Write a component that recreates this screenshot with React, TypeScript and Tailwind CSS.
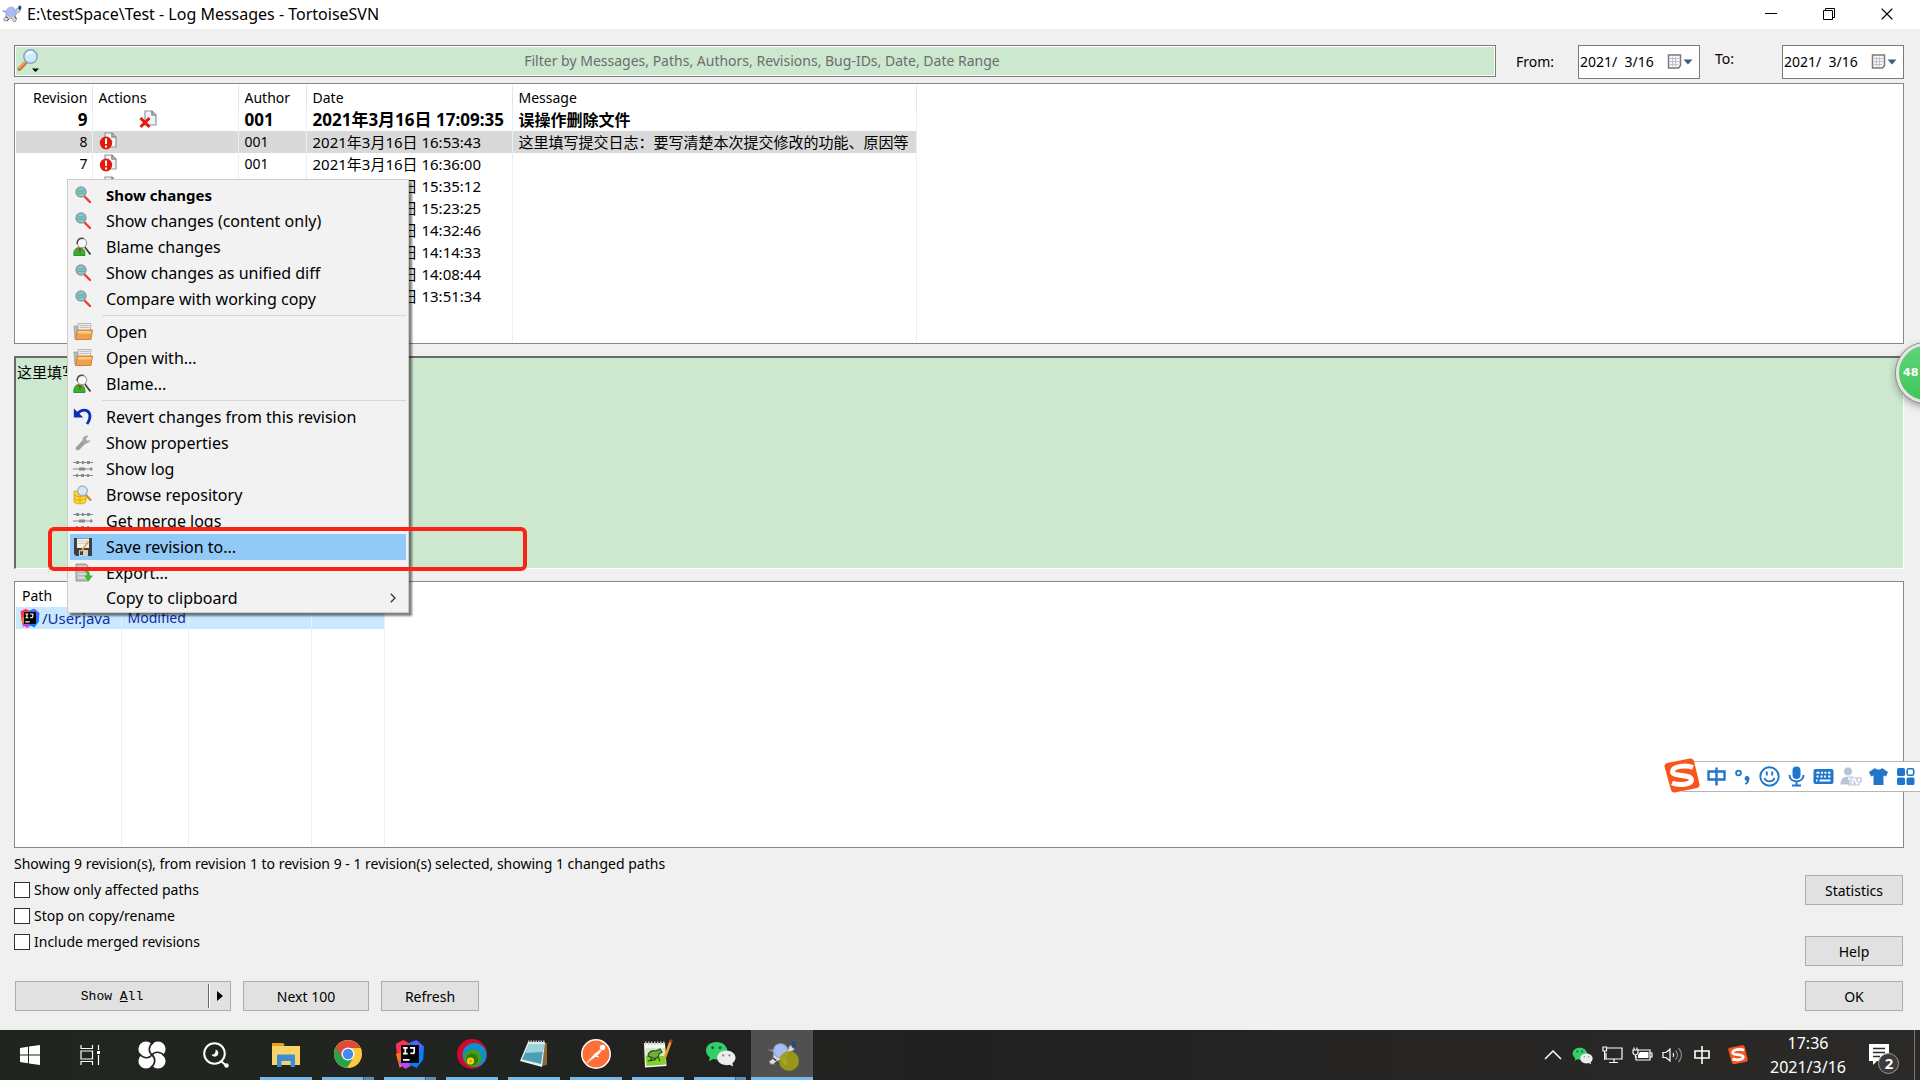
import React, { useState } from 'react';
import { X } from 'lucide-react';

const UI_FONT = "font-['Noto_Sans','Noto_Sans_CJK_SC',sans-serif]";

interface Revision {
  id: number;
  action: 'modified' | 'deleted';
  author: string;
  date: string;
  message: string;
}

const revisions: Revision[] = [
  { id: 9, action: 'deleted', author: '001', date: '2021年3月16日 17:09:35', message: '误操作删除文件' },
  { id: 8, action: 'modified', author: '001', date: '2021年3月16日 16:53:43', message: '这里填写提交日志：要写清楚本次提交修改的功能、原因等' },
  { id: 7, action: 'modified', author: '001', date: '2021年3月16日 16:36:00', message: '' },
  { id: 6, action: 'modified', author: '001', date: '2021年3月16日 15:35:12', message: '' },
  { id: 5, action: 'modified', author: '001', date: '2021年3月16日 15:23:25', message: '' },
  { id: 4, action: 'modified', author: '001', date: '2021年3月16日 14:32:46', message: '' },
  { id: 3, action: 'modified', author: '001', date: '2021年3月16日 14:14:33', message: '' },
  { id: 2, action: 'modified', author: '001', date: '2021年3月16日 14:08:44', message: '' },
  { id: 1, action: 'modified', author: '001', date: '2021年3月16日 13:51:34', message: '' },
];

const DiffIcon = () => (
  <svg width="20" height="20" viewBox="0 0 20 20">
    <path d="M10 10l2.500 2.500" stroke="#a9a9a9" strokeWidth="2.400" />
    <path d="M12 12l5 5" stroke="#ef3f2c" strokeWidth="2.400" strokeLinecap="round" />
    <circle cx="8" cy="7" r="4.900" fill="#86cbca" stroke="#8f9a9c" strokeWidth="1.500" />
    <path d="M4.500 6h7M4.500 8.300h7" stroke="#56a3a5" strokeWidth="1" />
  </svg>
);

const BlameIcon = () => (
  <svg width="20" height="20" viewBox="0 0 20 20">
    <path d="M.8 18.500c-.3-5.500 2-8 5.700-8s5.500 2.500 5.500 8z" fill="#35b32a" stroke="#1f7d18" strokeWidth="0.800" />
    <path d="M5.500 11l1.500 6 1.500-6z" fill="#b8361f" />
    <path d="M11.500 9.500l6 8" stroke="#3d3d3d" strokeWidth="1.800" />
    <path d="M12.800 9.500l5 6.500" stroke="#cfcfcf" strokeWidth="0.800" />
    <circle cx="9" cy="6" r="4.700" fill="#f4f6f8" stroke="#a3a7ab" strokeWidth="1.200" />
    <path d="M4.200 7c-.5-4.500 3-6.500 6.500-5.500" fill="none" stroke="#5b4a38" strokeWidth="1.500" />
  </svg>
);

const FolderIcon = () => (
  <svg width="20" height="20" viewBox="0 0 20 20">
    <path d="M1 4h4l1 2v11H2z" fill="#b9b9b9" stroke="#8d8d8d" strokeWidth="0.600" />
    <path d="M5 1.500h13l-.8 8H5z" fill="#ececec" stroke="#9f9f9f" strokeWidth="0.700" />
    <path d="M6.500 3.500h10M6.500 5.500h10" stroke="#b5b5b5" strokeWidth="0.800" />
    <path d="M4.500 8h15l-1.500 9.500H2.500z" fill="#f0a04b" stroke="#c9741f" strokeWidth="0.800" />
    <path d="M5.200 9h13.200l-.4 2.500H4.800z" fill="#f9c88d" />
  </svg>
);

const RevertIcon = () => (
  <svg width="20" height="20" viewBox="0 0 20 20">
    <path d="M.8 1.500v9h9.500z" fill="#0c2fb4" />
    <path d="M4.500 6.500C8.500 2 14.500 2 16.500 6.500c1.200 3.500 0 7-2.500 10.500" fill="none" stroke="#0c2fb4" strokeWidth="2.800" />
  </svg>
);

const WrenchIcon = () => (
  <svg width="20" height="20" viewBox="0 0 20 20">
    <path d="M4.800 15.200l6.500-6.500" stroke="#a0a0a0" strokeWidth="4.200" strokeLinecap="round" />
    <path d="M15.500 2.500c-4-.8-7 2.500-5.500 6 1.500 3 6 2.500 7.500-1.500l-3 .8-1.500-1.500z" fill="#a8a8a8" />
  </svg>
);

const LogIcon = () => (
  <svg width="20" height="20" viewBox="0 0 20 20" stroke="#8a8a8a">
    <path d="M0 3.500h20M0 10h20M0 16.500h20" strokeWidth="1" />
    <path d="M3 3.500h3M9 3.500h2M14 3.500h3M6 10h6M17 10h2M3 16.500h2M8 16.500h3M14 16.500h2" strokeWidth="3" />
  </svg>
);

const RepoIcon = () => (
  <svg width="20" height="20" viewBox="0 0 20 20">
    <path d="M1 6v11c2 2.500 10 2.500 12 0V6z" fill="#fbd62e" stroke="#c99a10" strokeWidth="0.700" />
    <path d="M1 10c2 2 10 2 12 0M1 13.500c2 2 10 2 12 0M7 6v13" stroke="#d9a514" fill="none" strokeWidth="0.900" />
    <path d="M13 10l5 5.500" stroke="#d98b3a" strokeWidth="2.400" />
    <circle cx="9.500" cy="5.800" r="4.800" fill="#d6e8f6" stroke="#9fb1c0" strokeWidth="1.300" />
  </svg>
);

const SaveIcon = () => (
  <svg width="20" height="20" viewBox="0 0 20 20">
    <path d="M1 1h18v18H3l-2-2z" fill="#3f3f42" />
    <path d="M4 1.500h12v9.500H4z" fill="#f1f1f1" />
    <path d="M5 4h10M5 6.500h10" stroke="#c5c5c5" strokeWidth="0.800" />
    <path d="M6 13h9v6H6z" fill="#cfcfcf" />
    <path d="M7 14h3v4H7z" fill="#3f3f42" />
    <path d="M15.500 4.500L8 14.500" stroke="#e5a33c" strokeWidth="1.800" />
  </svg>
);

const ExportIcon = () => (
  <svg width="20" height="20" viewBox="0 0 20 20">
    <path d="M3 1h10l2 2v15H3z" fill="#b8bcbf" stroke="#85898c" strokeWidth="0.800" />
    <path d="M4.500 4h9M4.500 7.500h9M4.500 11h9M4.500 14.500h9" stroke="#dfe2e3" strokeWidth="1.500" />
    <path d="M7 7.500c5 0 7 1.500 7 5h-3l4.500 6 4.500-6h-3c0-5-4-7-10-5z" fill="#42b62c" />
  </svg>
);

const ModifiedIcon = () => (
  <svg width="18" height="20" viewBox="0 0 18 20">
    <path d="M6 1h7l4 4v10H6z" fill="#f1f4f6" stroke="#8c97a3" strokeWidth="1.200" />
    <path d="M13 1v4h4" fill="none" stroke="#5f6b78" strokeWidth="1.200" />
    <ellipse cx="7" cy="11" rx="6.200" ry="6.500" fill="#e11a0c" />
    <path d="M7 6.500v5.500M7 13.500v2" stroke="#fff" strokeWidth="2" />
  </svg>
);

const DeletedIcon = () => (
  <svg width="18" height="20" viewBox="0 0 18 20">
    <path d="M6 1h7l4 4v10H6z" fill="#f1f4f6" stroke="#8c97a3" strokeWidth="1.200" />
    <path d="M13 1v4h4" fill="none" stroke="#5f6b78" strokeWidth="1.200" />
    <path d="M1.500 8l9 9M10.500 8l-9 9" stroke="#e11a0c" strokeWidth="3" />
  </svg>
);

const TortoiseIcon = ({ size }: { size: number }) => (
  <svg width={size} height={size} viewBox="0 0 32 32">
    <path d="M1 11l6 3-1 7-4 3 2 3h5l3-4h4l2 5h4l1-5-2-4 3-5 5-2-1-6-4 1-2 5-4 2z" fill="#d9dcdf" stroke="#6d7278" strokeWidth="1" />
    <path d="M6 20l4 3M20 20l3 4M11 24l-3 3" stroke="#3c4045" strokeWidth="1.600" />
    <circle cx="14.500" cy="12.500" r="7.500" fill="#a9bcf5" stroke="#8ea0d6" strokeWidth="1.200" />
    <ellipse cx="28.500" cy="6" rx="2.500" ry="3.500" fill="#1d4f80" />
  </svg>
);

const IntellijIcon = ({ size }: { size: number }) => (
  <svg width={size} height={size} viewBox="0 0 32 32">
    <path d="M1 5l8-4 9 5-8 14-8-2z" fill="#fe315d" />
    <path d="M1 16l7-2 3 12-6 5z" fill="#f97a12" />
    <path d="M3 25l6-5 9 8-7 4z" fill="#b74af7" />
    <path d="M15 4l8-3 8 7-1 14-7 9-8-4z" fill="#087cfa" />
    <path d="M18 3l6-1 5 6-3 8z" fill="#6b57ff" />
    <path d="M6.500 6.500h19v19h-19z" fill="#000" />
    <path d="M8.500 9.500h5M11 9.500v6M8.500 15.500h5M16 9.500h4.500v4.500c0 1.500-2.500 2-4 .8M8.500 22.200h7" stroke="#fff" strokeWidth="1.800" fill="none" />
  </svg>
);

const WechatIcon = ({ size }: { size: number }) => (
  <svg width={size} height={size} viewBox="0 0 32 32">
    <path d="M12 4C5.500 4 1 8 1 13c0 3 1.500 5.300 4 7l-1 4 4.500-2.300c1.200.3 2.300.4 3.500.4 6 0 11-4 11-9S18 4 12 4z" fill="#35cf68" />
    <circle cx="8" cy="10" r="1.500" fill="#14662f" />
    <circle cx="15.500" cy="10" r="1.500" fill="#14662f" />
    <path d="M22 13c5.500 0 9.500 3.500 9.500 7.500 0 2.300-1.200 4.300-3.200 5.600l.8 3.400-3.700-1.900c-1 .3-2.200.4-3.400.4-5.300 0-9.500-3.300-9.500-7.500S16.700 13 22 13z" fill="#ececec" />
    <circle cx="18.800" cy="18" r="1.200" fill="#8b8b8b" />
    <circle cx="25.200" cy="18" r="1.200" fill="#8b8b8b" />
  </svg>
);

const SogouIcon = ({ size }: { size: number }) => (
  <svg width={size} height={size} viewBox="0 0 36 36">
    <path d="M3 5L26 .6q3-.5 4 2.500l5.500 23q.5 3-2.500 4L11 34.500q-3 .5-4-2.500L.6 9q-.6-3 2.400-4z" fill="#f9541a" />
    <path d="M29 9.500C22 6.500 8 8 8.500 14c.5 5 18 2 19 7.500.5 5-12 6.500-19.500 3.500" fill="none" stroke="#fff" strokeWidth="5" />
  </svg>
);

const CalendarIcon = () => (
  <svg width="26" height="18" viewBox="0 0 26 18">
    <path d="M1.500 2h12v10.500l-2 2.500h-10z" fill="#f3f5fa" stroke="#85766f" strokeWidth="1.500" />
    <path d="M3 5.500h9M3 8.500h9M3 11.500h8M5.500 4v9.500M8.500 4v9.500" stroke="#b9c1d2" strokeWidth="1" />
    <path d="M16.500 6.500h9l-4.500 5z" fill="#43598e" />
  </svg>
);

const menuGroups = [
  [
    { label: 'Show changes', icon: DiffIcon, bold: true },
    { label: 'Show changes (content only)', icon: DiffIcon },
    { label: 'Blame changes', icon: BlameIcon },
    { label: 'Show changes as unified diff', icon: DiffIcon },
    { label: 'Compare with working copy', icon: DiffIcon },
  ],
  [
    { label: 'Open', icon: FolderIcon },
    { label: 'Open with...', icon: FolderIcon },
    { label: 'Blame...', icon: BlameIcon },
  ],
  [
    { label: 'Revert changes from this revision', icon: RevertIcon },
    { label: 'Show properties', icon: WrenchIcon },
    { label: 'Show log', icon: LogIcon },
    { label: 'Browse repository', icon: RepoIcon },
    { label: 'Get merge logs', icon: LogIcon },
    { label: 'Save revision to...', icon: SaveIcon, active: true },
    { label: 'Export...', icon: ExportIcon },
    { label: 'Copy to clipboard', submenu: true },
  ],
] as { label: string; icon?: React.FC; bold?: boolean; active?: boolean; submenu?: boolean }[][];

const TitleBar = () => (
  <header className="flex h-[29px] items-center bg-white pb-[2px] pl-[2px] pr-1">
    <TortoiseIcon size={20} />
    <h1 className="ml-[5px] flex-1 text-base leading-5">E:\testSpace\Test - Log Messages - TortoiseSVN</h1>
    <button aria-label="Minimize" className="flex h-full w-[58px] items-center justify-center">
      <svg width="12" height="12" viewBox="0 0 12 12"><path d="M0 5.500h12" stroke="#000" /></svg>
    </button>
    <button aria-label="Restore" className="flex h-full w-[58px] items-center justify-center">
      <svg width="12" height="12" viewBox="0 0 12 12" fill="none" stroke="#000">
        <path d="M.5 2.500h9v9h-9zM2.500 2.500v-2h9v9h-2" />
      </svg>
    </button>
    <button aria-label="Close" className="flex h-full w-[58px] items-center justify-center">
      <X className="h-5 w-5" strokeWidth={1.3} />
    </button>
  </header>
);

const DateField = ({ id, label }: { id: string; label: string }) => (
  <div className="flex h-[34px] w-[122px] items-center border border-[#7a7a7a] bg-white pl-px">
    <input id={id} defaultValue="2021/  3/16" className="min-w-0 flex-1 outline-none" />
    <button aria-label={label} className="mr-[6px]">
      <CalendarIcon />
    </button>
  </div>
);

const FilterBar = () => (
  <div className="flex items-start">
    <div className="flex h-8 flex-1 items-center border border-[#7a7a7a] bg-[#cce8cf] ring-1 ring-inset ring-white">
      <button aria-label="Filter options" className="ml-[2px]">
        <svg width="24" height="26" viewBox="0 0 24 26">
          <path d="M2.500 21l6.500-7" stroke="#c9762c" strokeWidth="4" strokeLinecap="round" />
          <path d="M2.500 20l6-6.500" stroke="#eeb468" strokeWidth="1.200" strokeLinecap="round" />
          <circle cx="13.500" cy="8.500" r="6.700" fill="#c9ecfb" stroke="#8fa6bd" strokeWidth="1.600" />
          <path d="M10 7c1-2.500 4-3.500 6-2" stroke="#fff" strokeWidth="2" fill="none" />
          <path d="M15 20.500h7l-3.500 3.500z" fill="#000" />
        </svg>
      </button>
      <input
        aria-label="Filter"
        placeholder="Filter by Messages, Paths, Authors, Revisions, Bug-IDs, Date, Date Range"
        className="min-w-0 flex-1 bg-transparent pr-3 text-center outline-none placeholder:text-[#6d6d6d]"
      />
    </div>
    <label htmlFor="from" className="ml-5 w-[62px] pt-[7px]">From:</label>
    <DateField id="from" label="Pick from date" />
    <label htmlFor="to" className="ml-[15px] w-[67px] pt-1">To:</label>
    <DateField id="to" label="Pick to date" />
  </div>
);

const RevisionTable = ({ selected, onSelect }: { selected: number; onSelect: (id: number) => void }) => (
  <div className="overflow-hidden border border-[#828790] bg-white p-px">
    <table className="h-full w-[900px] table-fixed border-collapse text-left">
      <colgroup>
        <col className="w-[76px]" />
        <col className="w-[146px]" />
        <col className="w-[68px]" />
        <col className="w-[206px]" />
        <col className="w-[404px]" />
      </colgroup>
      <thead>
        <tr className="h-6 [&>th]:border-r [&>th]:border-[#e5e5e5] [&>th]:pl-[6px] [&>th]:pt-[2px] [&>th]:font-normal">
          <th className="pr-1 text-right">Revision</th>
          <th>Actions</th>
          <th>Author</th>
          <th>Date</th>
          <th>Message</th>
        </tr>
      </thead>
      <tbody className="leading-4 [&_td]:border-r [&_td]:border-[#e6f0fb] [&_td]:py-0 [&_td]:pl-[6px] [&_td]:whitespace-nowrap">
        {revisions.map((rev) => (
          <tr
            key={rev.id}
            onClick={() => onSelect(rev.id)}
            className={`h-[22px] ${rev.id === selected ? 'bg-[#d9d9d9]' : ''} ${rev.id === 9 ? 'text-[17px]/4 font-bold' : ''}`}
          >
            <td className="pr-1 text-right">{rev.id}</td>
            <td>
              <div className={rev.action === 'deleted' ? 'pl-10' : ''}>
                {rev.action === 'deleted' ? <DeletedIcon /> : <ModifiedIcon />}
              </div>
            </td>
            <td>{rev.author}</td>
            <td className={rev.id === 9 ? '' : 'text-[15px]/4'}>{rev.date}</td>
            <td className={rev.id === 9 ? 'text-base/4' : 'text-[15px]/4'}>{rev.message}</td>
          </tr>
        ))}
        <tr>
          <td /><td /><td /><td /><td />
        </tr>
      </tbody>
    </table>
  </div>
);

const PathTable = () => (
  <div className="overflow-hidden border border-[#828790] bg-white p-px">
    <table className="h-full w-[368px] table-fixed border-collapse text-left">
      <colgroup>
        <col className="w-[105px]" />
        <col className="w-[67px]" />
        <col className="w-[123px]" />
        <col className="w-[73px]" />
      </colgroup>
      <thead>
        <tr className="h-6 [&>th]:border-r [&>th]:border-[#e5e5e5] [&>th]:pl-[6px] [&>th]:pt-[2px] [&>th]:font-normal">
          <th>Path</th>
          <th />
          <th />
          <th />
        </tr>
      </thead>
      <tbody className="[&_td]:border-r [&_td]:border-[#e6f0fb] [&_td]:py-0">
        <tr className="h-[22px] bg-[#cce8ff] text-[#0a2fa8]">
          <td>
            <div className="flex items-center pl-1">
              <IntellijIcon size={20} />
              <span className="ml-[2px] text-[15px]/5">/User.java</span>
            </div>
          </td>
          <td className="pl-[6px]">Modified</td>
          <td />
          <td />
        </tr>
        <tr>
          <td /><td /><td /><td />
        </tr>
      </tbody>
    </table>
  </div>
);

const PushButton = ({ children, className }: { children: React.ReactNode; className: string }) => (
  <button className={`h-[30px] border border-[#adadad] bg-[#e1e1e1] pt-px ${className}`}>{children}</button>
);

const options = ['Show only affected paths', 'Stop on copy/rename', 'Include merged revisions'];

const Footer = () => (
  <div className="flex justify-between pb-[19px]">
    <div>
      <p className="pt-[6px] leading-5">
        Showing 9 revision(s), from revision 1 to revision 9 - 1 revision(s) selected, showing 1 changed paths
      </p>
      <div className="pt-[3px]">
        {options.map((option) => (
          <label key={option} className="flex h-[26px] items-center gap-1">
            <input type="checkbox" className="h-4 w-4 appearance-none border border-[#333] bg-white checked:bg-[#333]" />
            {option}
          </label>
        ))}
      </div>
      <div className="flex gap-3 pl-px pt-[26px]">
        <div className="flex h-[30px] w-[216px] items-center border border-[#adadad] bg-[#e1e1e1]">
          <button className="h-full flex-1 pt-px font-['Liberation_Mono',monospace] text-[13px]">
            Show <span className="underline">A</span>ll
          </button>
          <span className="h-6 w-[2px] border-l border-[#696969] bg-white" />
          <button aria-label="More show options" className="flex h-full w-5 items-center justify-center">
            <svg width="6" height="10" viewBox="0 0 6 10"><path d="M0 0l6 5-6 5z" fill="#000" /></svg>
          </button>
        </div>
        <PushButton className="w-[126px]">Next 100</PushButton>
        <PushButton className="w-[98px]">Refresh</PushButton>
      </div>
    </div>
    <div className="flex flex-col pr-px pt-[27px]">
      <PushButton className="w-[98px]">Statistics</PushButton>
      <PushButton className="mt-[31px] w-[98px]">Help</PushButton>
      <PushButton className="mt-[15px] w-[98px]">OK</PushButton>
    </div>
  </div>
);

const ContextMenu = () => (
  <div
    role="menu"
    className="absolute left-[67px] top-[179px] w-[342px] border border-[#ccc] bg-[#f2f2f2] p-[2px] text-base leading-5 shadow-[3px_3px_2px_rgba(0,0,0,0.5)]"
  >
    {menuGroups.map((group, index) => (
      <div key={index}>
        {index > 0 && <div className="ml-8 flex h-[7px] items-center"><hr className="w-full border-[#d7d7d7]" /></div>}
        {group.map((item) => (
          <button
            key={item.label}
            role="menuitem"
            className={`flex w-full items-center pl-[3px] text-left ${item.submenu ? 'h-6' : 'h-[26px]'} ${item.active ? 'bg-[#91c9f7]' : 'hover:bg-[#91c9f7]'} ${item.bold ? 'text-[15px] font-bold' : ''}`}
          >
            <span className="w-5">{item.icon && <item.icon />}</span>
            <span className="ml-[13px] flex-1">{item.label}</span>
            {item.submenu && (
              <svg className="mr-[10px]" width="6" height="10" viewBox="0 0 6 10" fill="none" stroke="#333" strokeWidth="1.300">
                <path d="M.8.8L5 5 .8 9.200" />
              </svg>
            )}
          </button>
        ))}
      </div>
    ))}
  </div>
);

const SpeedBall = () => (
  <div className="absolute -right-9 top-[343px] flex h-[60px] w-[60px] items-center rounded-full border-[3px] border-[#e4e4e4] bg-gradient-to-b from-[#5fd27a] to-[#3fc856] pl-1 font-['DejaVu_Sans',sans-serif] text-[11px] font-bold text-white shadow-[0_3px_8px_rgba(0,0,0,0.4)] ring-1 ring-[#8c8c8c]">
    48
  </div>
);

const ImeBar = () => (
  <div className="absolute right-0 top-[758px] flex items-start">
    <div className="relative z-10 -mr-[18px]"><SogouIcon size={36} /></div>
    <div className="mt-[3px] flex h-[31px] w-[238px] items-center justify-end gap-[6px] border-y border-[#b5b5b5] bg-white pr-1 text-[#2176cc]">
      <svg width="21" height="21" viewBox="0 0 21 21" fill="none" stroke="currentColor" strokeWidth="2.400">
        <path d="M2.500 5.500h16v8h-16zM10.500 1.500v18" />
      </svg>
      <svg width="20" height="21" viewBox="0 0 20 21" fill="none" stroke="currentColor" strokeWidth="1.800">
        <circle cx="5.500" cy="7" r="2.400" />
        <circle cx="14" cy="12.500" r="2.400" fill="currentColor" stroke="none" />
        <path d="M15.300 12.500c.2 2.500-.8 4.500-3 5.500" />
      </svg>
      <svg width="21" height="21" viewBox="0 0 21 21" fill="none" stroke="currentColor" strokeWidth="1.900">
        <circle cx="10.500" cy="10.500" r="9.200" />
        <path d="M7.800 5.500v4M13.200 5.500v4M5.500 12c1.500 4.500 8.500 4.500 10 0" />
      </svg>
      <svg width="21" height="21" viewBox="0 0 21 21" fill="none" stroke="currentColor" strokeWidth="2">
        <rect x="6.500" y="0.500" width="8" height="12.500" rx="4" fill="currentColor" stroke="none" />
        <path d="M3.500 9c0 8.500 14 8.500 14 0M10.500 15v4M6 19.500h9" />
      </svg>
      <svg width="21" height="21" viewBox="0 0 21 21">
        <rect x="0.500" y="3" width="20" height="15" rx="2" fill="currentColor" />
        <path d="M3.500 6.700h3M8 6.700h2M11.500 6.700h2M15 6.700h2.500M3.500 10.500h2M7.500 10.500h2M11 10.500h2M15 10.500h2.500M3 14.500h1.500M6.500 14.500h11" stroke="#fff" strokeWidth="1.900" />
      </svg>
      <svg width="22" height="21" viewBox="0 0 22 21">
        <circle cx="8" cy="5.500" r="4" fill="#b8c2d8" />
        <path d="M.5 18.500c0-5 2-7.500 6-7.500h3v7.500z" fill="#b8c2d8" />
        <path d="M7.500 11h5v1h8.500v4h-2v3h-4v-1.500l-2 1.500h-4v-5h-1.500z" fill="#fff" stroke="#b8c2d8" strokeWidth="1.200" />
        <path d="M11 12v6M14 14v3.500M17 12v4" stroke="#b8c2d8" strokeWidth="1.200" />
      </svg>
      <svg width="21" height="21" viewBox="0 0 21 21" fill="currentColor">
        <path d="M7 2c1.500 2 5.500 2 7 0l6 4-2 4.500-2.500-1V19h-10V9.500l-2.500 1L1 6z" />
      </svg>
      <svg width="21" height="21" viewBox="0 0 21 21" fill="currentColor">
        <rect x="2" y="2" width="8" height="8" rx="1.500" />
        <rect x="12.200" y="2.800" width="6.500" height="6.500" rx="1.500" fill="none" stroke="currentColor" strokeWidth="1.600" />
        <rect x="2" y="11.500" width="8" height="7.500" rx="1.500" />
        <rect x="11.500" y="11.500" width="8" height="7.500" rx="1.500" />
      </svg>
    </div>
  </div>
);

const pinnedApps: { name: string; icon: React.ReactNode; stacked?: boolean; active?: boolean }[] = [
  {
    name: 'File Explorer',
    icon: (
      <svg width="28" height="26" viewBox="0 0 28 26">
        <path d="M0 2h11l2 2h-1v4H0z" fill="#e3a21a" />
        <path d="M0 5h28v19H0z" fill="#fbd468" />
        <path d="M5 26V14.500q0-1 1-1h16q1 0 1 1V26h-4.500v-6h-9v6z" fill="#3a8fd4" />
      </svg>
    ),
  },
  {
    name: 'Chrome',
    stacked: true,
    icon: (
      <svg width="28" height="28" viewBox="0 0 28 28">
        <circle cx="14" cy="14" r="14" fill="#fdc93d" />
        <path d="M14 14L1.900 7A14 14 0 0 0 13 28l5.500-9z" fill="#2ba14b" />
        <path d="M1.900 7A14 14 0 0 1 26.500 8H14l-6.500 8.500z" fill="#dd4a3e" />
        <circle cx="14" cy="14" r="6.500" fill="#fff" />
        <circle cx="14" cy="14" r="5.200" fill="#4688f1" />
      </svg>
    ),
  },
  { name: 'IntelliJ IDEA', stacked: true, icon: <IntellijIcon size={30} /> },
  {
    name: 'Browser',
    icon: (
      <svg width="30" height="30" viewBox="0 0 30 30">
        <circle cx="15" cy="15" r="15" fill="#cf0a2c" />
        <circle cx="17.500" cy="16" r="12" fill="#0b8fd0" />
        <circle cx="16" cy="19" r="8.700" fill="#4c9a1d" />
        <circle cx="15" cy="20.500" r="6" fill="#2f7a12" />
        <circle cx="13.500" cy="22" r="3.600" fill="#f6d80b" />
        <circle cx="13.500" cy="22" r="1.500" fill="#d79a08" />
      </svg>
    ),
  },
  {
    name: 'Notepad',
    icon: (
      <svg width="30" height="28" viewBox="0 0 30 28">
        <path d="M24 3h4v22l-5 1z" fill="#8a6b35" />
        <path d="M9 2h17l-3 25L1 21z" fill="#e6f1f4" />
        <path d="M10 4h15l-3 20L3 19.500z" fill="#4aa0b5" />
        <path d="M10 4h15l-1 8L6 13z" fill="#9fd2dd" />
        <path d="M9 1.500h17" stroke="#b9c4c8" strokeWidth="2" strokeDasharray="1.500 1" />
      </svg>
    ),
  },
  {
    name: 'Postman',
    icon: (
      <svg width="30" height="30" viewBox="0 0 30 30">
        <circle cx="15" cy="15" r="14.200" fill="#ff7038" stroke="#fff" strokeWidth="1.500" />
        <circle cx="21.500" cy="8.500" r="2.700" fill="#fff" />
        <path d="M19 10.500l-5.500 4.500-5.500 7.500 8.500-6 4-4.500z" fill="#fff" />
        <path d="M6 24l9-10M14 17l4 1" stroke="#fff" strokeWidth="1.100" />
      </svg>
    ),
  },
  {
    name: 'Notepad++',
    icon: (
      <svg width="30" height="30" viewBox="0 0 30 30">
        <path d="M1 4h21l1.500 23L2 28.500z" fill="#f4f6f0" />
        <path d="M2.500 16h19.900l.5 9.500L3.500 27z" fill="#7fd02d" />
        <path d="M2.500 9h19.600l.3 8H2.800z" fill="#d5ecb4" />
        <path d="M5 17c0-4 4-6 8-5l4-2 2 3-3 2c0 3-3 5-6 4zM8 19v3M15 18l2 4M5 22c4-1 6 0 8-2" stroke="#2c4b22" strokeWidth="1.200" fill="#6fae42" />
        <path d="M2 4h20" stroke="#b9b9b9" strokeWidth="3" strokeDasharray="1.500 1.500" />
        <path d="M28 1.500l-6.500 18" stroke="#e8a12b" strokeWidth="2.600" />
        <path d="M28.500.5l-1 3" stroke="#b03325" strokeWidth="2.600" />
      </svg>
    ),
  },
  { name: 'WeChat', stacked: true, icon: <WechatIcon size={31} /> },
  {
    name: 'TortoiseSVN',
    active: true,
    icon: (
      <span className="relative block">
        <TortoiseIcon size={30} />
        <span className="absolute left-3 top-3 h-5 w-5 rounded-full bg-[#a09d12]/90" />
      </span>
    ),
  },
];

const Taskbar = () => (
  <footer className="flex h-[50px] items-stretch bg-gradient-to-r from-[#20261f] via-[#222121] to-[#2b2a28] text-white">
    <button aria-label="Start" className="flex w-15 items-center justify-center">
      <svg width="20" height="20" viewBox="0 0 20 20" fill="#fff">
        <path d="M0 3l8-1.200v7.700H0zM9 1.600L20 0v9.500H9zM0 10.500h8v7.700L0 17zM9 10.500h11V20L9 18.400z" />
      </svg>
    </button>
    <button aria-label="Task view" className="flex w-15 items-center justify-center">
      <svg width="20" height="20" viewBox="0 0 20 20" fill="none" stroke="#fff" strokeWidth="1.200">
        <path d="M1 0v3.500h11.500V0M1 6h11.500v8H1zM1 20v-3.500h11.500V20M18.500 0v5M18.500 10v10" />
        <path d="M17 6h3v3h-3z" fill="#fff" stroke="none" />
      </svg>
    </button>
    <button aria-label="Fan" className="flex w-16 items-center justify-center">
      <svg width="28" height="28" viewBox="0 0 28 28" fill="#fff" stroke="#222" strokeWidth="1.600">
        {/* four blades, each tucked under the next one */}
        <circle cx="8" cy="8" r="7.600" stroke="none" />
        <circle cx="20" cy="8" r="7.600" stroke="none" />
        <circle cx="20" cy="20" r="7.600" stroke="none" />
        <circle cx="8" cy="20" r="7.600" stroke="none" />
        <circle cx="14" cy="14" r="4" stroke="none" />
        <path d="M14 14C10 11 10.500 5 15 1.500M14 14c3-4 9-3.500 12.500 1M14 14c4 3 3.500 9-1 12.500M14 14c-3 4-9 3.500-12.500-1" fill="none" />
      </svg>
    </button>
    <button aria-label="Search" className="flex w-16 items-center justify-center">
      <svg width="26" height="26" viewBox="0 0 26 26" fill="none" stroke="#fff">
        <circle cx="11.500" cy="11.500" r="10.300" strokeWidth="2" />
        <path d="M12.500 7.500a3.600 3.600 0 1 1-4 5c3 .5 4.500-2 4-5z" fill="#fff" stroke="none" />
        <path d="M18.500 19.500l4 3.500" strokeWidth="2" />
        <circle cx="23.500" cy="23.500" r="2.200" fill="#fff" stroke="none" />
      </svg>
    </button>
    <nav className="ml-[7px] flex">
      {pinnedApps.map((app) => (
        <button
          key={app.name}
          aria-label={app.name}
          className={`flex w-[62px] flex-col items-center ${app.active ? 'bg-[#505050]' : 'px-[5px]'}`}
        >
          <span className="flex flex-1 items-center">{app.icon}</span>
          <span className="flex h-[3px] w-full bg-[#76b9ed]">
            {app.stacked && <span className="ml-auto w-[11px] border-l border-[#3c5f7c] bg-[#5b8db5]" />}
          </span>
        </button>
      ))}
    </nav>
    <div className="ml-auto flex items-center">
      <svg width="18" height="20" viewBox="0 0 18 20" fill="none" stroke="#fff" strokeWidth="1.500"><path d="M1 14l8-8 8 8" /></svg>
      <span className="ml-[10px]"><WechatIcon size={21} /></span>
      <svg className="ml-[9px]" width="21" height="20" viewBox="0 0 21 20" fill="none" stroke="#fff" strokeWidth="1.200">
        <path d="M5 3h15v11H4V8M12 14v3M7 17.500h9" />
        <path d="M1 2h3.500v4H1zM2.700 6v9" />
      </svg>
      <svg className="ml-[9px]" width="21" height="20" viewBox="0 0 21 20" fill="none" stroke="#fff" strokeWidth="1.200">
        <path d="M6 5h12v10H4V11M18 8h2v4h-2" />
        <path d="M8 7h8.500v6H6V10z" fill="#fff" stroke="none" />
        <path d="M1 5h5v3q-1 2-2.500 2T1 8zM2 2.500v2M5 2.500v2M3.500 10v3" />
      </svg>
      <svg className="ml-[9px]" width="21" height="20" viewBox="0 0 21 20" fill="none" stroke="#fff" strokeWidth="1.200">
        <path d="M1 7.500h3l4-3.500v12l-4-3.500H1z" />
        <path d="M11 8q1.500 2 0 4" />
        <path d="M13.500 5.500q4 4.500 0 9M16.500 3q6 7 0 14" stroke="#8a8a88" />
      </svg>
      <svg className="ml-[11px]" width="16" height="20" viewBox="0 0 16 20" fill="none" stroke="#fff" strokeWidth="1.600">
        <path d="M1 6h14v7H1zM8 1v18" />
      </svg>
      <span className="ml-[18px]"><SogouIcon size={20} /></span>
      <time className="ml-[22px] w-[76px] text-center text-base leading-6">
        17:36
        <br />
        2021/3/16
      </time>
      <button aria-label="Notifications" className="relative ml-[23px] mt-[10px] h-[32px] w-[32px]">
        <svg width="32" height="32" viewBox="0 0 32 32">
          <path d="M0 0h20v17H8l-4 4v-4H0z" fill="#fff" />
          <path d="M4 4.500h12M4 8.500h12M4 12.500h7" stroke="#2c2b29" strokeWidth="1.300" />
          <circle cx="19.500" cy="19.500" r="10" fill="#3c3b39" stroke="#9a9a98" strokeWidth="1" />
        </svg>
        <span className="absolute left-[10px] top-[9px] w-5 text-center text-[15px] font-bold leading-5">2</span>
      </button>
      <span className="ml-[13px] mr-[5px] h-[50px] w-px bg-[#7a7a78]" />
    </div>
  </footer>
);

export default function App() {
  const [selected, setSelected] = useState(8);
  const message = revisions.find((rev) => rev.id === selected)?.message;

  return (
    <div className={`relative flex h-screen min-h-[720px] flex-col overflow-hidden bg-[#f0f0f0] text-[14px] leading-5 text-black ${UI_FONT}`}>
      <TitleBar />
      <main className="flex min-h-0 flex-1 flex-col pl-[14px] pr-4 pt-4">
        <FilterBar />
        <div className="mt-1 grid min-h-0 flex-1 grid-rows-[261fr_213fr_267fr] gap-3">
          <RevisionTable selected={selected} onSelect={setSelected} />
          <textarea
            aria-label="Log message"
            readOnly
            value={message}
            className="w-full resize-none border-2 border-b border-r border-[#696969] border-b-white border-r-white bg-[#cce8cf] px-px py-1 text-[15px] leading-5 outline-none"
          />
          <PathTable />
        </div>
        <Footer />
      </main>
      <Taskbar />
      <ContextMenu />
      <div className="pointer-events-none absolute left-[48px] top-[527px] h-[44px] w-[479px] rounded-md border-4 border-[#fd2113]" />
      <SpeedBall />
      <ImeBar />
    </div>
  );
}
